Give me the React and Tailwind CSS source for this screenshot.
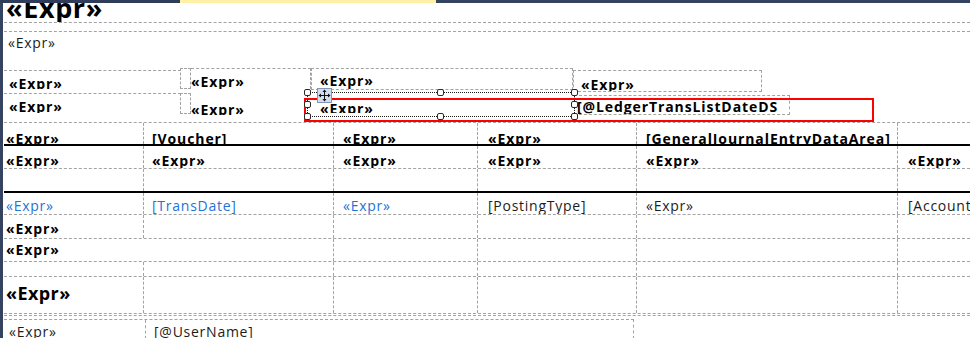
import React from "react";

const DASH = "border-dashed border-[#a3a3a3]";
const B = "font-bold text-[14px] leading-[14px] tracking-[0.9px] text-black whitespace-nowrap";
const R = "font-normal text-[14px] leading-[14px] tracking-[0.75px] text-[#1c1c1c] whitespace-nowrap";
const BL = "font-normal text-[14px] leading-[14px] tracking-[0.75px] text-[#2273d6] whitespace-nowrap";

const W = ["w-[140px]", "w-[190px]", "w-[144px]", "w-[159px]", "w-[261px]", "flex-1"];
const PL = ["pl-[2px]", "pl-[8px]", "pl-[9px]", "pl-[10px]", "pl-[9px]", "pl-[10px]"];

function Row({ h, border = true, cells, pt, text }) {
  return (
    <div className={`flex ${h} ${border ? "border-b " + DASH : ""}`}>
      {cells.map((c, i) => (
        <div
          key={i}
          className={`${W[i]} ${PL[i]} ${pt} shrink-0 overflow-hidden ${i < 5 ? "border-r " + DASH : ""}`}
        >
          {c ? <div className={Array.isArray(text) ? text[i] : text}>{c}</div> : null}
        </div>
      ))}
    </div>
  );
}

function Handle({ cls }) {
  return <div className={`absolute w-[7px] h-[7px] bg-white border border-[#2a2a2a] rounded-[2px] ${cls}`} />;
}

export default function App() {
  return (
    <div className="w-[970px] h-[338px] overflow-hidden bg-white font-['Open_Sans',sans-serif] flex flex-col">
      {/* top strip */}
      <div className="flex h-[3px] shrink-0">
        <div className="w-[180px] bg-[#2f3d5b]" />
        <div className="w-[256px] bg-[#fff2a8]" />
        <div className="flex-1 bg-[#34435f]" />
      </div>
      <div className="flex flex-1 min-h-0">
        <div className="w-[3px] shrink-0 bg-[#34435f]" />
        <div className="flex-1 min-w-0 ml-[1px] flex flex-col">
          {/* canvas */}
          <div className="relative h-[119px] shrink-0">
            <div className={`h-[20px] overflow-hidden border-b ${DASH} pl-[2px]`}>
              <div className="-mt-[9.5px] font-bold text-[27px] leading-[27px] tracking-[0.6px] text-black whitespace-nowrap">«Expr»</div>
            </div>
            <div className={`mt-[8px] h-[26px] border-t ${DASH} pl-[4px] pt-[4px]`}>
              <div className={R}>«Expr»</div>
            </div>

            {/* row C */}
            <div className={`absolute left-0 top-[67px] w-[177px] h-[19px] overflow-hidden border-t ${DASH} pl-[5px] pt-[6px]`}>
              <div className={B}>«Expr»</div>
            </div>
            <div className={`absolute left-[176px] top-[65px] w-[11px] h-[21px] border ${DASH}`} />
            <div className={`absolute left-[187px] top-[65px] w-[120px] h-[21px] overflow-hidden border-t border-r ${DASH} pt-[6px]`}>
              <div className={B}>«Expr»</div>
            </div>
            <div className={`absolute left-[307px] top-[65px] w-[262px] h-[22px] overflow-hidden border ${DASH} pl-[8px] pt-[5px]`}>
              <div className={B}>«Expr»</div>
            </div>
            <div className={`absolute left-[569px] top-[67px] w-[189px] h-[22px] overflow-hidden border ${DASH} pl-[7px] pt-[7px]`}>
              <div className={B}>«Expr»</div>
            </div>

            {/* row D */}
            <div className={`absolute left-0 top-[90px] w-[177px] h-[20px] overflow-hidden border-t ${DASH} pl-[5px] pt-[6px]`}>
              <div className={B}>«Expr»</div>
            </div>
            <div className={`absolute left-[176px] top-[90px] w-[11px] h-[21px] border ${DASH}`} />
            <div className="absolute left-[187px] top-[90px] w-[110px] h-[22px] overflow-hidden pt-[10px]">
              <div className={B}>«Expr»</div>
            </div>
            <div className={`absolute left-[570px] top-[92px] w-[216px] h-[20px] overflow-hidden border ${DASH} pl-[2px] pt-[4px]`}>
              <div className={B}>[@LedgerTransListDateDS</div>
            </div>
            <div className="absolute left-[303px] top-[89px] w-[268px] h-[25px] border border-dotted border-[#1a1a1a]">
              <div className="h-[20px] overflow-hidden pl-[12px] pt-[9px]">
                <div className={B}>«Expr»</div>
              </div>
            </div>

            {/* red highlight */}
            <div className="absolute left-[300px] top-[95px] w-[570px] h-[24px] border-2 border-[#ff0000]" />

            {/* selection handles */}
            <Handle cls="left-[300px] top-[86px]" />
            <Handle cls="left-[433px] top-[86px]" />
            <Handle cls="left-[567px] top-[86px]" />
            <Handle cls="left-[300px] top-[98px]" />
            <Handle cls="left-[567px] top-[98px]" />
            <Handle cls="left-[300px] top-[110px]" />
            <Handle cls="left-[433px] top-[110px]" />
            <Handle cls="left-[567px] top-[110px]" />

            {/* move glyph */}
            <div className="absolute left-[313px] top-[85px] w-[15px] h-[15px] bg-[#d3ddef] border border-[#8394b6]">
              <svg width="13" height="13" viewBox="0 0 13 13" className="block">
                <path d="M6.5 2v9M2 6.5h9" stroke="#111" strokeWidth="1" />
                <path d="M6.5 0.5L4.5 3h4zM6.5 12.5L4.5 10h4zM0.5 6.5L3 4.5v4zM12.5 6.5L10 4.5v4z" fill="#111" />
              </svg>
            </div>
          </div>

          {/* table */}
          <div className={`border-t ${DASH} shrink-0`}>
            <Row h="h-[21px]" border={false} pt="pt-[9px]" text={B}
              cells={["«Expr»", "[Voucher]", "«Expr»", "«Expr»", "[GeneralJournalEntryDataArea]", ""]} />
            <div className="h-[2px] bg-black" />
            <Row h="h-[23px]" pt="pt-[8px]" text={B}
              cells={["«Expr»", "«Expr»", "«Expr»", "«Expr»", "«Expr»", "«Expr»"]} />
            <Row h="h-[22px]" border={false} pt="pt-0" text={B} cells={["", "", "", "", "", ""]} />
            <div className="h-[2px] bg-black" />
            <Row h="h-[22px]" pt="pt-[6px]" text={[BL, BL, BL, R, R, R]}
              cells={["«Expr»", "[TransDate]", "«Expr»", "[PostingType]", "«Expr»", "[AccountNum]"]} />
            <Row h="h-[24px]" pt="pt-[7px]" text={B} cells={["«Expr»", "", "", "", "", ""]} />
            <div className={`flex h-[23px] border-b ${DASH}`}>
              <div className={`w-[330px] shrink-0 pl-[2px] pt-[4px] border-r ${DASH}`}>
                <div className={B}>«Expr»</div>
              </div>
              <div className={`w-[144px] shrink-0 border-r ${DASH}`} />
              <div className={`w-[159px] shrink-0 border-r ${DASH}`} />
              <div className={`w-[261px] shrink-0 border-r ${DASH}`} />
              <div className="flex-1" />
            </div>
            <Row h="h-[15px]" pt="pt-0" text={B} cells={["", "", "", "", "", ""]} />
            <Row h="h-[37px]" pt="pt-[7px]"
              text="font-bold text-[18px] leading-[18px] tracking-[0.4px] text-black whitespace-nowrap"
              cells={["«Expr»", "", "", "", "", ""]} />
            <div className={`mt-[1px] border-t ${DASH}`} />
          </div>

          {/* footer */}
          <div className={`mt-[3px] w-[630px] h-[30px] flex border-t border-r ${DASH}`}>
            <div className={`w-[142px] shrink-0 border-r ${DASH} pl-[5px] pt-[5px]`}>
              <div className={R}>«Expr»</div>
            </div>
            <div className="flex-1 pl-[8px] pt-[5px]">
              <div className={R}>[@UserName]</div>
            </div>
          </div>
        </div>
      </div>
    </div>
  );
}
